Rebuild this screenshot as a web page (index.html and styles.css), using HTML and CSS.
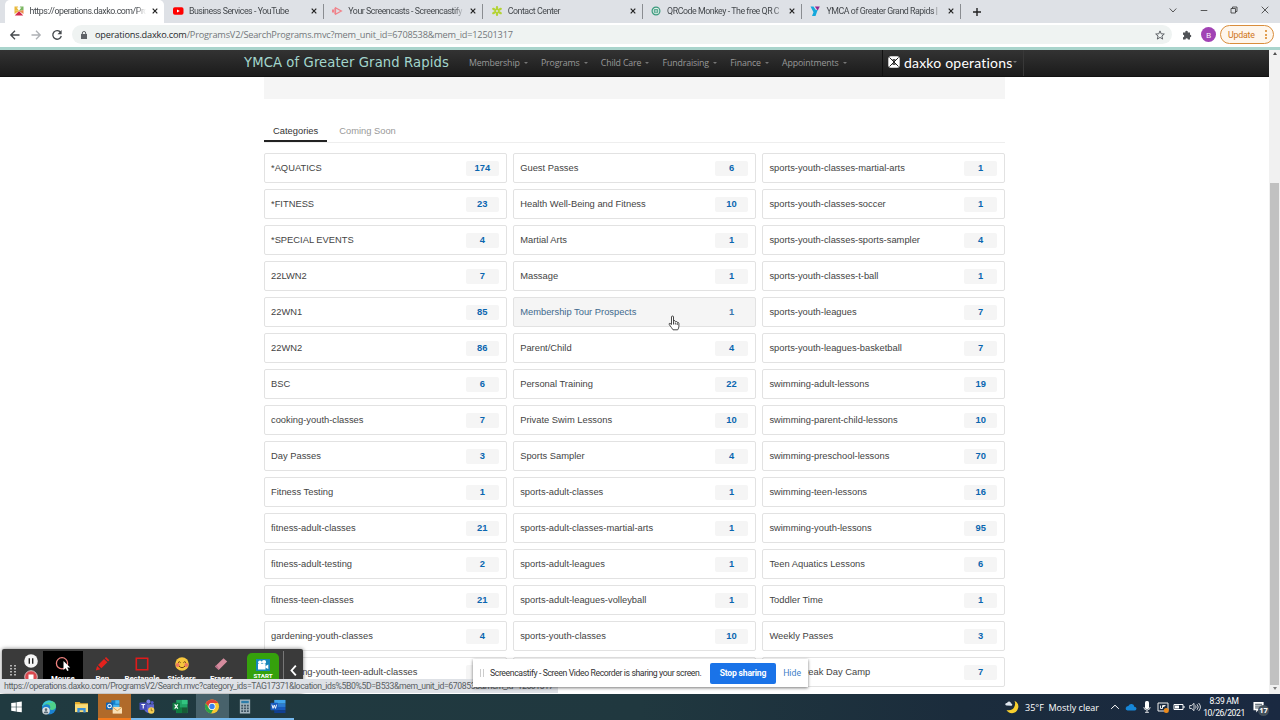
FILE: index.html
```html
<!DOCTYPE html>
<html lang="en">
<head>
    <meta charset="UTF-8">
    <title>Search Programs</title>
    <link rel="stylesheet" href="styles.css">
</head>
<body>
<div class="tabstrip">
    <div class="tab active">
        <svg class="favicon" viewBox="0 0 10 10"><path fill="#e8b93c" d="M.5.500h3.500l1 4.500-4.500-1z"/><path fill="#7bb661" d="M6 .5h3.500V4L5 5z"/><path fill="#d5294d" d="M.8 9.500L5 5l4.200 4.500z"/><path fill="#e8b93c" d="M.5 4l4.500 1-4.500 3z"/><path fill="#e98b4a" d="M9.500 4L5 5l4.500 3z"/><path fill="#fff" d="M2.500 1.500h5L5 4.500z"/></svg>
        <span class="tab-title">https://operations.daxko.com/Pro</span>
        <svg class="close" viewBox="0 0 6 6"><path d="M.7.7l4.600 4.600M5.300.7L.7 5.300"/></svg>
    </div>
    <div class="tab">
        <svg class="favicon" viewBox="0 0 10 10"><rect y="1.300" width="10.500" height="7.400" rx="1.800" fill="#f00"/><path fill="#fff" d="M4 3.400v3.200L6.800 5z"/></svg>
        <span class="tab-title">Business Services - YouTube</span>
        <svg class="close" viewBox="0 0 6 6"><path d="M.7.7l4.600 4.600M5.300.7L.7 5.300"/></svg>
    </div>
    <div class="tab">
        <svg class="favicon" viewBox="0 0 10 10"><path fill="none" stroke="#f0828a" stroke-width="1.300" d="M3.500 1.800L9.300 5 3.500 8.200z"/><path fill="#f0828a" d="M0 3.500h2v3H0zM2.400 2h1.200v6H2.400z"/></svg>
        <span class="tab-title">Your Screencasts - Screencastify</span>
        <svg class="close" viewBox="0 0 6 6"><path d="M.7.7l4.600 4.600M5.300.7L.7 5.300"/></svg>
    </div>
    <div class="tab">
        <svg class="favicon" viewBox="0 0 10 10"><path stroke="#b4d335" stroke-width="2.200" stroke-linecap="round" d="M5 1v8M1.200 2.800l7.600 4.400M1.200 7.200l7.600-4.400"/><circle cx="5" cy="5" r="1" fill="#dee1e6"/></svg>
        <span class="tab-title">Contact Center</span>
        <svg class="close" viewBox="0 0 6 6"><path d="M.7.7l4.600 4.600M5.300.7L.7 5.300"/></svg>
    </div>
    <div class="tab">
        <svg class="favicon" viewBox="0 0 10 10"><circle cx="5" cy="5" r="3.900" fill="#e2f0ea" stroke="#3b9a7d" stroke-width="1.200"/><path fill="none" stroke="#3b9a7d" stroke-width=".8" d="M3.300 3.500h3.400v3.200H3.300zM3 5h4"/></svg>
        <span class="tab-title">QRCode Monkey - The free QR C</span>
        <svg class="close" viewBox="0 0 6 6"><path d="M.7.7l4.600 4.600M5.300.7L.7 5.300"/></svg>
    </div>
    <div class="tab">
        <svg class="favicon" viewBox="0 0 10 10"><path fill="#15a8dc" d="M.5.500h3L6 4.200 8 3 5.500 10H2l1.500-3.800z"/><path fill="#92278f" d="M4.800.500h5L7.700 4.500z"/></svg>
        <span class="tab-title">YMCA of Greater Grand Rapids |</span>
        <svg class="close" viewBox="0 0 6 6"><path d="M.7.7l4.600 4.600M5.300.7L.7 5.300"/></svg>
    </div>
    <svg class="new-tab" viewBox="0 0 8 8"><path d="M4 0v8M0 4h8"/></svg>
    <div class="window-buttons">
        <svg viewBox="0 0 8 8"><path d="M.7 2.500L4 6l3.300-3.500"/></svg>
        <svg viewBox="0 0 8 8"><path d="M.7 4.500h6.600"/></svg>
        <svg viewBox="0 0 8 8"><path d="M1 2.500h4.500V7H1zM2.500 2.500V1H7v4.500H5.500"/></svg>
        <svg viewBox="0 0 8 8"><path d="M.7.7l6.600 6.600M7.300.7L.7 7.300"/></svg>
    </div>
</div>

<div class="toolbar">
    <svg class="nav-icon" viewBox="0 0 12 12"><path d="M10.500 6H2M6 1.800L1.800 6 6 10.200"/></svg>
    <svg class="nav-icon disabled" viewBox="0 0 12 12"><path d="M1.500 6H10M6 1.800L10.200 6 6 10.200"/></svg>
    <svg class="nav-icon" viewBox="0 0 12 12"><path d="M9.700 3.500A4.300 4.300 0 1 0 10.300 7"/><path class="solid" d="M10.600 1v4.200H6.500z"/></svg>
    <div class="omnibox">
        <svg class="lock" viewBox="0 0 6 8"><path d="M0 3h6v5H0z"/><path fill="none" stroke="#5f6368" stroke-width="1" d="M1.300 3.500V2a1.700 1.500 0 0 1 3.400 0v1.500"/></svg>
        <span class="url"><span class="host">operations.daxko.com</span>/ProgramsV2/SearchPrograms.mvc?mem_unit_id=6708538&amp;mem_id=12501317</span>
        <svg class="star" viewBox="0 0 10 10"><path d="M5 .9l1.200 2.900 3.100.2L6.900 6l.8 3.100L5 7.400 2.300 9.100 3.100 6 .7 4l3.100-.2z"/></svg>
    </div>
    <svg class="puzzle" viewBox="0 0 10 10"><path d="M1 2.500h2.300a1.300 1.300 0 1 1 2.500 0H8v2.200a1.300 1.300 0 1 1 0 2.600v2.200H5.900a1.200 1.200 0 1 0-2.400 0H1V7.200a1.200 1.200 0 1 0 0-2.400z"/></svg>
    <div class="avatar">B</div>
    <div class="update">Update<span class="dots"><i></i><i></i><i></i></span></div>
</div>

<div class="viewport">
    <div class="page">
        <div class="navbar">
            <div class="brand">YMCA of Greater Grand Rapids</div>
            <div class="menu">
                <span class="menu-item">Membership</span>
                <span class="menu-item">Programs</span>
                <span class="menu-item">Child Care</span>
                <span class="menu-item">Fundraising</span>
                <span class="menu-item">Finance</span>
                <span class="menu-item">Appointments</span>
            </div>
            <div class="product">
                <svg viewBox="0 0 12 12"><rect x=".3" y=".3" width="11.400" height="11.400" rx="2.500" fill="#fff"/><path stroke="#222" stroke-width="1" d="M1.500 1.500l9 9M10.500 1.500l-9 9"/><path fill="#222" d="M4.200 3.300L6 5.200l1.800-1.900zM4.200 8.700L6 6.800l1.800 1.900z"/></svg>
                <span class="product-name">daxko operations</span>
            </div>
        </div>
        <div class="container">
            <div class="filter-box"></div>
            <div class="pills">
                <a class="pill selected">Categories</a>
                <a class="pill">Coming Soon</a>
            </div>
            <div class="categories">
                <a class="category">*AQUATICS<b>174</b></a>
                <a class="category">*FITNESS<b>23</b></a>
                <a class="category">*SPECIAL EVENTS<b>4</b></a>
                <a class="category">22LWN2<b>7</b></a>
                <a class="category">22WN1<b>85</b></a>
                <a class="category">22WN2<b>86</b></a>
                <a class="category">BSC<b>6</b></a>
                <a class="category">cooking-youth-classes<b>7</b></a>
                <a class="category">Day Passes<b>3</b></a>
                <a class="category">Fitness Testing<b>1</b></a>
                <a class="category">fitness-adult-classes<b>21</b></a>
                <a class="category">fitness-adult-testing<b>2</b></a>
                <a class="category">fitness-teen-classes<b>21</b></a>
                <a class="category">gardening-youth-classes<b>4</b></a>
                <a class="category">gardening-youth-teen-adult-classes<b></b></a>

                <a class="category">Guest Passes<b>6</b></a>
                <a class="category">Health Well-Being and Fitness<b>10</b></a>
                <a class="category">Martial Arts<b>1</b></a>
                <a class="category">Massage<b>1</b></a>
                <a class="category hovered">Membership Tour Prospects<b>1</b></a>
                <a class="category">Parent/Child<b>4</b></a>
                <a class="category">Personal Training<b>22</b></a>
                <a class="category">Private Swim Lessons<b>10</b></a>
                <a class="category">Sports Sampler<b>4</b></a>
                <a class="category">sports-adult-classes<b>1</b></a>
                <a class="category">sports-adult-classes-martial-arts<b>1</b></a>
                <a class="category">sports-adult-leagues<b>1</b></a>
                <a class="category">sports-adult-leagues-volleyball<b>1</b></a>
                <a class="category">sports-youth-classes<b>10</b></a>
                <a class="category"></a>

                <a class="category">sports-youth-classes-martial-arts<b>1</b></a>
                <a class="category">sports-youth-classes-soccer<b>1</b></a>
                <a class="category">sports-youth-classes-sports-sampler<b>4</b></a>
                <a class="category">sports-youth-classes-t-ball<b>1</b></a>
                <a class="category">sports-youth-leagues<b>7</b></a>
                <a class="category">sports-youth-leagues-basketball<b>7</b></a>
                <a class="category">swimming-adult-lessons<b>19</b></a>
                <a class="category">swimming-parent-child-lessons<b>10</b></a>
                <a class="category">swimming-preschool-lessons<b>70</b></a>
                <a class="category">swimming-teen-lessons<b>16</b></a>
                <a class="category">swimming-youth-lessons<b>95</b></a>
                <a class="category">Teen Aquatics Lessons<b>6</b></a>
                <a class="category">Toddler Time<b>1</b></a>
                <a class="category">Weekly Passes<b>3</b></a>
                <a class="category">Spring Break Day Camp<b>7</b></a>
            </div>
        </div>
    </div>
    <div class="scrollbar">
        <span class="arrow up"></span>
        <span class="thumb"></span>
        <span class="arrow down"></span>
    </div>

    <div class="recorder">
        <svg class="grip" viewBox="0 0 6 11"><path stroke="#ddd" stroke-width="1.500" stroke-dasharray="1.500 1.500" d="M1 0v11M5 0v11"/></svg>
        <div class="controls">
            <svg viewBox="0 0 14 14"><circle cx="7" cy="7" r="6.800" fill="#f5f5f5"/><path stroke="#222" stroke-width="1.400" d="M5.300 4.300v5.400M8.700 4.300v5.400"/></svg>
            <svg viewBox="0 0 14 14"><circle cx="7" cy="7" r="6.300" fill="#d9484f" stroke="#ddd" stroke-width=".8"/><path fill="#fff" d="M4.500 4.500h5v5h-5z"/></svg>
        </div>
        <div class="tool current"><svg viewBox="0 0 16 16"><circle cx="7" cy="7.300" r="5.600" fill="none" stroke="#f0827f" stroke-width="1.300"/><path fill="#fff" d="M8.500 5v9l2.200-2 1.500 3 1.500-.8-1.500-2.800h3z"/></svg>Mouse</div>
        <div class="tool"><svg viewBox="0 0 16 16"><path fill="#e3211c" d="M1.800 14.500l1.300-4.500 3.300 3.200zM4 9l6-6 3.400 3.300-6 6zM10.800 2.200L12 1.100l3.300 3.200-1.200 1.200z"/></svg>Pen</div>
        <div class="tool"><svg viewBox="0 0 16 16"><path fill="none" stroke="#e01b1b" stroke-width="1.600" d="M2.300 2.300h11.400v11.400H2.300z"/></svg>Rectangle</div>
        <div class="tool"><svg viewBox="0 0 16 16"><circle cx="8" cy="8" r="6.800" fill="#f8c73d"/><circle cx="3.700" cy="9" r="1.900" fill="#ee7763"/><circle cx="12.300" cy="9" r="1.900" fill="#ee7763"/><path fill="none" stroke="#6b3b12" stroke-width="1" d="M4 6.700q1.300-2 2.600 0M9.400 6.700q1.300-2 2.600 0M5 10q3 3.400 6 0"/></svg>Stickers</div>
        <div class="tool"><svg viewBox="0 0 16 16"><path fill="#d58c9e" d="M2 10.500l8.500-8.300 3.700 3.300-8.500 8.600z"/><path fill="#b76f86" d="M2 10.500l3.700 3.600v-1.600L3.600 9z"/></svg>Eraser</div>
        <div class="start"><svg viewBox="0 0 14 12"><rect x="2" y="5" width="7.500" height="5.500" fill="#fff"/><circle cx="4" cy="3.300" r="1.900" fill="#fff"/><circle cx="8" cy="3" r="2.100" fill="#fff"/><path fill="#fff" d="M9.500 7l2.800-1.500v4.500L9.500 8.800z"/></svg>START</div>
        <svg class="collapse" viewBox="0 0 6 10"><path d="M5 .8L1.300 5 5 9.200"/></svg>
    </div>

    <div class="status-bubble">https://operations.daxko.com/ProgramsV2/Search.mvc?category_ids=TAG17371&amp;location_ids%5B0%5D=B533&amp;mem_unit_id=6708538&amp;mem_id=12501317</div>

    <div class="share-bar">
        <span class="share-grip"></span>
        <span class="share-text">Screencastify - Screen Video Recorder is sharing your screen.</span>
        <button class="stop">Stop sharing</button>
        <a class="hide">Hide</a>
    </div>

    <svg class="pointer" viewBox="0 0 12 16"><path d="M3.500 9.500V2a1 1 0 0 1 2 0v4.500l.3-.8q1.500-.3 1.700.8 1.400-.4 1.700.8 1.600-.2 1.700 1.200v2.800q0 1.900-1.200 3.500H5Q3.500 12.500 1.300 9.700q-.6-1.300.6-1.400z"/><path d="M7.300 7.500v2M5.500 6.500v3M9.200 8v2"/></svg>
</div>

<div class="taskbar">
    <div class="apps">
        <div class="app"><svg viewBox="0 0 14 14"><path fill="#fff" d="M1.300 2.800l5-.7v4.500h-5zM7 2l5.700-.8v5.400H7zM1.300 7.300h5v4.500l-5-.7zM7 7.300h5.700v5.400L7 12z"/></svg></div>
        <div class="app"><svg class="large" viewBox="0 0 16 16"><circle cx="8" cy="8" r="7.500" fill="#1b82d1"/><path fill="#4fd08a" d="M1 6Q3 0 9 .5q7 1 6.500 7-1 3.500-5.500 3-2-.5-.5-2.500Q9 4 5 4.500 2.500 5 1 7z"/><path fill="#35c1e8" d="M1 6Q3 1 8 .7q3 .3 4 2.300Q6 1 1 7z"/><circle cx="4.800" cy="11.500" r="4" fill="#dbe0e3"/><circle cx="4.800" cy="10.300" r="1.400" fill="#596b78"/><path fill="#596b78" d="M2.200 14q0-2 2.600-2t2.600 2z"/></svg></div>
        <div class="app"><svg viewBox="0 0 14 14"><path fill="#e8ad2c" d="M0 1.500h5l1 1.500h8v9H0z"/><path fill="#fbdc78" d="M0 4h14v8.500H0z"/><path fill="#3b90d8" d="M2.500 8.200h9v4.800H9V10.500H5V13H2.500z"/></svg></div>
        <div class="app running alert"><svg class="large" viewBox="0 0 18 16"><path fill="#1380cd" d="M6 1h9v10H6z"/><path fill="#44b3ee" d="M10.500 1H15v4h-4.500zM6 6h9v5H6z"/><rect y="3.500" width="8" height="8" rx=".8" fill="#0f64b5"/><circle cx="4" cy="7.500" r="2" fill="none" stroke="#fff" stroke-width="1.200"/><path fill="#fae0b4" d="M7.500 8.500H18V16H7.500z"/><path fill="none" stroke="#d89943" d="M7.500 8.800l5.200 4 5.300-4"/></svg></div>
        <div class="app running"><svg class="large" viewBox="0 0 16 16"><circle cx="9.500" cy="2.800" r="2.200" fill="#7b83eb"/><circle cx="13.500" cy="3.800" r="1.600" fill="#5059c9"/><path fill="#5f66cf" d="M5 5.500h10.500v6q-2 3.500-5 3.500-5-.5-5.500-5z"/><rect y="3.800" width="8" height="8" rx=".8" fill="#464eb8"/><path stroke="#fff" stroke-width="1.200" d="M2 5.800h4M4 5.800v4.300"/><circle cx="12.500" cy="12.300" r="3.400" fill="#f8cf51"/><path fill="none" stroke="#7b5d17" stroke-width=".8" d="M12.500 10v2.500h1.700"/></svg></div>
        <div class="app running"><svg class="large" viewBox="0 0 16 16"><path fill="#21a366" d="M4 1h12v14H4z"/><path fill="#33c481" d="M10 1h6v4.500h-6z"/><path fill="#107c41" d="M4 9h6v6H4z"/><path fill="#185c37" d="M10 9h6v6h-6z"/><rect y="4" width="8" height="8" rx=".8" fill="#107c41"/><path stroke="#fff" stroke-width="1.200" d="M2.300 5.700l3.400 4.600M5.700 5.700l-3.400 4.600"/></svg></div>
        <div class="app running focused"><svg class="large" viewBox="0 0 16 16"><circle cx="8" cy="8" r="7.500" fill="#f9c92f"/><path fill="#df4135" d="M8 .5a7.500 7.500 0 0 1 6.500 3.800H8A3.700 3.700 0 0 0 4.500 9L1.400 4.400A7.500 7.500 0 0 1 8 .5z"/><path fill="#2aa14c" d="M1.400 4.400L4.700 10q1.300 2 4.300 1.700L7 15.500A7.500 7.500 0 0 1 1.400 4.400z"/><circle cx="8" cy="8" r="3.700" fill="#fff"/><circle cx="8" cy="8" r="2.900" fill="#3b82ef"/></svg></div>
        <div class="app running"><svg class="large" viewBox="0 0 16 16"><path fill="#a3b4bd" d="M2.500.5h11v15h-11z"/><path fill="#2d7ca9" d="M4 2h8v2.500H4z"/><path stroke="#3d5260" stroke-width="1.800" stroke-dasharray="2 1" d="M4 7h8M4 10h8M4 13h8"/></svg></div>
        <div class="app running"><svg class="large" viewBox="0 0 16 16"><path fill="#41a5ee" d="M4 1h12v4H4z"/><path fill="#2b7cd3" d="M4 5h12v3.500H4z"/><path fill="#185abd" d="M4 8.500h12V12H4z"/><path fill="#103f91" d="M4 12h12v3H4z"/><rect y="4" width="8" height="8" rx=".8" fill="#185abd"/><path fill="none" stroke="#fff" d="M1.500 6l1.200 4L4 6.500 5.300 10l1.200-4"/></svg></div>
    </div>
    <div class="tray">
        <svg class="moon" viewBox="0 0 14 14"><path fill="#f8d02e" d="M9.500.8Q14 3 13.300 7.500 12 13 7 13.200 3 13 1.500 10 7 11 9 7.500 11 4 9.500.8z"/><path fill="#dfe6ee" d="M1.500 5.500Q0 5.300.3 3.900.8 2.800 2 3q.6-1.700 2.300-1.500Q6 2 6 3.500q1.300.1 1.300 1.200T6 5.700z"/></svg>
        <span class="weather">35°F&nbsp; Mostly clear</span>
        <svg class="tray-icon" viewBox="0 0 12 12"><path fill="none" stroke="#fff" d="M2.200 7.800L6 4.200l3.800 3.600"/></svg>
        <svg class="tray-icon" viewBox="0 0 12 12"><path fill="#1687d9" d="M2.500 9.500Q.3 9 .7 7 1.300 5 3.300 5q1.200-2.400 3.500-2 2.200.4 2.500 2.700 2 .1 2.200 1.900-.1 1.800-1.700 1.900z"/></svg>
        <svg class="tray-icon" viewBox="0 0 12 12"><rect x="4" y="0" width="4" height="8" rx="1.500" fill="#fff"/><path fill="none" stroke="#fff" stroke-width=".8" d="M2.800 6q0 3 3.200 3t3.200-3M6 9v2.500M4 11.300h4"/></svg>
        <svg class="tray-icon" viewBox="0 0 12 12"><path fill="none" stroke="#eee" d="M1 2h10v7M1 2v8h6M3.500 4.500v3h2v-3h3M5.500 5.500h2"/><circle cx="9.300" cy="9.500" r="2.500" fill="#ec8b1d"/></svg>
        <svg class="tray-icon" viewBox="0 0 12 12"><path fill="none" stroke="#fff" d="M1 3.500h9v5H1zM11 5v2"/><path fill="#fff" d="M2 4.500h4v3H2z"/></svg>
        <svg class="tray-icon" viewBox="0 0 12 12"><path fill="none" stroke="#fff" stroke-width=".8" d="M.7 4.500h2L5 2.300v7.400L2.700 7.500h-2zM6.500 4.500q1.300 1.500 0 3M8 3.200q2.500 2.800 0 5.600M9.600 2q3.700 4 0 8"/></svg>
        <div class="clock"><span>8:39 AM</span><span>10/26/2021</span></div>
        <div class="notifications">
            <svg viewBox="0 0 13 13"><path fill="#fff" d="M.5.5h11v9H5.500L3.500 12V9.500h-3z"/><path stroke="#1b2d3b" stroke-width=".9" d="M2.300 3h7.500M2.300 5h7.500M2.300 7h5"/></svg>
            <span class="count">17</span>
        </div>
    </div>
</div>
</body>
</html>
```
FILE: styles.css
```css
* {
    box-sizing: border-box;
}
body {
    margin: 0;
    width: 1280px;
    height: 720px;
    overflow: hidden;
    display: flex;
    flex-direction: column;
    font-family: "Open Sans", "Noto Sans", sans-serif;
    font-size: 9px;
    background: #fff;
}
svg {
    display: block;
    flex: none;
}
.tabstrip {
    flex: none;
    height: 23px;
    padding-left: 5px;
    display: flex;
    align-items: center;
    background: #dee1e6;
}
.tab {
    flex: none;
    width: 159.4px;
    height: 23px;
    padding: 0 6px 1px 8.500px;
    display: flex;
    align-items: center;
    color: #45494d;
    border-right: 1px solid #8a8d91;
    border-image: linear-gradient(transparent 5px, #8a8d91 5px, #8a8d91 18px, transparent 18px) 1;
}
.tab.active {
    background: #fff;
    border: 0;
    border-radius: 5px 5px 0 0;
}
.favicon {
    width: 10px;
    height: 10px;
    margin-right: 6px;
    overflow: visible;
}
.tab-title {
    flex: 1;
    overflow: hidden;
    white-space: nowrap;
    font-family: Roboto, sans-serif;
    font-size: 8.800px;
    letter-spacing: -0.45px;
    margin-right: 6px;
    -webkit-mask-image: linear-gradient(to right, #000 92%, transparent);
}
.close {
    width: 6px;
    height: 6px;
    fill: none;
    stroke: #222;
    stroke-width: 1.200;
}
.new-tab {
    width: 8px;
    height: 8px;
    margin-left: 12px;
    stroke: #222;
    stroke-width: 1.400;
}
.window-buttons {
    margin-left: auto;
    padding-right: 11px;
    height: 23px;
    padding-bottom: 4px;
    display: flex;
    align-items: center;
    gap: 22.700px;
}
.window-buttons svg {
    width: 8px;
    height: 8px;
    fill: none;
    stroke: #333;
    stroke-width: 0.8;
}
.toolbar {
    flex: none;
    height: 24px;
    padding: 0 6px 1px 9px;
    display: flex;
    align-items: center;
    background: #fff;
}
.nav-icon {
    width: 12px;
    height: 12px;
    margin-right: 9px;
    fill: none;
    stroke: #45494d;
    stroke-width: 1.300;
}
.nav-icon .solid {
    fill: #45494d;
    stroke: none;
}
.nav-icon.disabled {
    stroke: #aeb1b5;
}
.omnibox {
    width: 1100px;
    flex: none;
    height: 19px;
    padding: 0 7px 0 9px;
    display: flex;
    align-items: center;
    border-radius: 10px;
    background: #eff3f2;
}
.lock {
    width: 6px;
    height: 8px;
    margin-right: 8px;
    fill: #5f6368;
}
.url {
    flex: 1;
    color: #73777b;
    font-size: 9.200px;
    letter-spacing: -0.19px;
    white-space: nowrap;
}
.host {
    color: #26292c;
}
.star {
    width: 10px;
    height: 10px;
    fill: none;
    stroke: #5f6368;
}
.puzzle {
    width: 10px;
    height: 10px;
    margin: 0 9px 0 10px;
    fill: #505357;
}
.avatar {
    flex: none;
    width: 15px;
    height: 15px;
    margin-right: 4px;
    border-radius: 50%;
    background: #a142b4;
    color: #fff;
    font-size: 8px;
    line-height: 15px;
    text-align: center;
}
.update {
    width: 54px;
    flex: none;
    height: 19px;
    padding: 0 6px 0 7px;
    display: flex;
    align-items: center;
    justify-content: space-between;
    border: 1px solid #d98d3b;
    border-radius: 10px;
    background: #fef6ec;
    color: #cf7519;
    font-family: Roboto, sans-serif;
    font-size: 8.800px;
    letter-spacing: -0.2px;
}
.dots {
    display: flex;
    flex-direction: column;
    gap: 1.500px;
}
.dots i {
    width: 2px;
    height: 2px;
    border-radius: 50%;
    background: #d9821f;
}

/* browser content area */
.viewport {
    position: relative;
    flex: none;
    height: 647px;
    display: flex;
    overflow: hidden;
    border-top: 3px solid #a9d4cc;
}
.page {
    flex: none;
    width: 1269px;
}
.navbar {
    height: 27px;
    padding-left: 244px;
    display: flex;
    align-items: center;
    background: linear-gradient(#333, #1b1b1b);
    border-bottom: 1px solid #111;
    white-space: nowrap;
}
.brand {
    width: 225px;
    color: #a3d6cd;
    font-family: "DejaVu Sans", Verdana, sans-serif;
    font-size: 13.200px;
    letter-spacing: 0.1px;
    line-height: 24px;
    padding-bottom: 1px;
}
.menu {
    width: 413px;
    padding-bottom: 1px;
    display: flex;
    gap: 13.200px;
    color: #999;
    font-size: 8.800px;
    letter-spacing: -0.14px;
}
.menu-item {
    display: flex;
    align-items: center;
    gap: 4px;
}
.menu-item::after, .product::after {
    content: "";
    border: 2.500px solid transparent;
    border-top-color: #777;
    border-bottom: 0;
}
.product {
    width: 142px;
    height: 26px;
    padding: 0 0 2px 5px;
    display: flex;
    align-items: center;
    border-left: 1px solid #111;
    border-right: 1px solid #383838;
}
.product svg {
    width: 12px;
    height: 12px;
    margin-right: 4px;
}
.product-name {
    color: #fff;
    font-family: Lato, sans-serif;
    font-size: 14px;
    letter-spacing: 0.2px;
    margin-right: 1px;
}
.container {
    width: 741px;
    margin-left: 264px;
    font-family: "Liberation Sans", Arial, sans-serif;
    font-size: 9.350px;
}
.filter-box {
    height: 22px;
    background: #f5f5f5;
}
.pills {
    height: 44px;
    margin-bottom: 10px;
    display: flex;
    align-items: flex-end;
    border-bottom: 1px solid #eee;
}
.pill {
    height: 24px;
    padding: 0 9px;
    margin-right: 3px;
    line-height: 26px;
    color: #999;
    border-bottom: 0 solid #222;
}
.pill.selected {
    color: #333;
    border-bottom-width: 2px;
}
.categories {
    display: grid;
    grid-template-rows: repeat(15, 30px);
    grid-template-columns: repeat(3, 242.800px);
    grid-auto-flow: column;
    gap: 6px 6.400px;
}
.category {
    padding: 0 7px 0 6px;
    display: flex;
    align-items: center;
    justify-content: space-between;
    border: 1px solid #e2e2e2;
    border-radius: 2px;
    color: #444;
}
.category b {
    width: 33px;
    height: 15px;
    border-radius: 2px;
    background: #f5f5f5;
    color: #0a66b0;
    line-height: 15px;
    text-align: center;
}
.category.hovered {
    background: #f5f5f5;
    color: #426a8e;
}
.category.hovered b {
    color: #3976ad;
}
.scrollbar {
    flex: 1;
    display: flex;
    flex-direction: column;
    align-items: center;
    background: #f1f1f1;
}
.thumb {
    width: 9px;
    height: 502px;
    margin-top: 128px;
    background: #c1c1c1;
}
.arrow {
    border: 2.500px solid transparent;
}
.arrow.up {
    border-top: 0;
    border-bottom: 3px solid #505050;
    margin-top: 2px;
}
.arrow.down {
    border-bottom: 0;
    border-top: 3px solid #808080;
    margin-top: 2px;
}

/* floating layers over the page */
.recorder {
    position: absolute;
    left: 2px;
    top: 599px;
    width: 301px;
    height: 44px;
    padding: 2px 0 0 8px;
    display: flex;
    background: #3a3a3a;
    border-radius: 2px;
    box-shadow: 0 0 4px #0008;
    color: #fff;
}
.grip {
    width: 6px;
    height: 11px;
    margin: 14px 8px 0 0;
}
.controls {
    width: 19px;
    padding-top: 3px;
}
.controls svg {
    width: 14px;
    height: 14px;
    margin-bottom: 2px;
}
.tool {
    width: 39.600px;
    padding-top: 5px;
    display: flex;
    flex-direction: column;
    align-items: center;
    font-family: Roboto, sans-serif;
    font-size: 7.800px;
    line-height: 14px;
    font-weight: bold;
}
.tool.current {
    background: #000;
}
.tool svg {
    width: 16px;
    height: 16px;
}
.start {
    width: 32px;
    margin: 2px 4px 0 6px;
    padding-top: 6px;
    border-radius: 5px;
    background: #35a10c;
    font-family: Roboto, sans-serif;
    font-size: 6.200px;
    font-weight: bold;
    text-align: center;
}
.start svg {
    width: 14px;
    height: 12px;
    margin: 0 auto 1px;
    background: #1686b8;
}
.collapse {
    width: 14px;
    height: 34px;
    padding: 5px 0 0 6px;
    border-left: 1px solid #777;
    fill: none;
    stroke: #fff;
    stroke-width: 1.600;
}
.status-bubble {
    position: absolute;
    left: 0;
    top: 629px;
    width: 558px;
    height: 14px;
    padding-left: 4px;
    background: #dee1e6;
    color: #5a5f64;
    font-family: Roboto, sans-serif;
    font-size: 8.700px;
    letter-spacing: -0.4px;
    line-height: 15px;
    white-space: nowrap;
}
.share-bar {
    position: absolute;
    left: 473px;
    top: 609px;
    width: 335px;
    height: 28px;
    padding: 0 7px;
    display: flex;
    align-items: center;
    background: #fff;
    box-shadow: 0 1px 3px #0008;
    font-family: Roboto, sans-serif;
    font-size: 8.700px;
    white-space: nowrap;
}
.share-grip {
    width: 4px;
    height: 8px;
    margin-right: 6px;
    border: solid #ccc;
    border-width: 0 1px;
}
.share-text {
    width: 221px;
    color: #333;
    letter-spacing: -0.4px;
}
.stop {
    width: 67px;
    height: 21px;
    padding: 0;
    border: 0;
    border-radius: 2px;
    background: #1a73e8;
    color: #fff;
    font: bold 8.600px Roboto, sans-serif;
    letter-spacing: -0.2px;
}
.hide {
    margin-left: 7px;
    color: #3f7fc8;
}
.pointer {
    position: absolute;
    left: 668px;
    top: 265px;
    width: 12px;
    height: 16px;
    fill: #fff;
    stroke: #333;
    stroke-width: 0.9;
}

.taskbar {
    flex: none;
    height: 26px;
    display: flex;
    justify-content: space-between;
    color: #fff;
    background: linear-gradient(to right, #203a40, #20383f 50%, #1b2c3c 75%, #1a2941);
}
.apps {
    display: flex;
}
.app {
    width: 32.700px;
    height: 26px;
    display: flex;
    align-items: center;
    justify-content: center;
}
.app svg {
    width: 13px;
    height: 14px;
}
.app svg.large {
    width: 16px;
    height: 15px;
}
.app.running {
    border-bottom: 2px solid #76b9ed;
    padding-top: 1px;
    background-clip: padding-box;
}
.app.alert {
    background-color: #b06a2a;
    border-color: #f37a1c;
}
.app.focused {
    background-color: #48626b;
}
.tray {
    display: flex;
    align-items: center;
    gap: 4px;
}
.moon {
    width: 14px;
    height: 14px;
    margin-right: 2px;
}
.weather {
    width: 80px;
}
.tray-icon {
    width: 12px;
    height: 12px;
}
.clock {
    width: 38px;
    display: flex;
    flex-direction: column;
    align-items: center;
    line-height: 12px;
    font-family: Roboto, sans-serif;
    font-size: 8.500px;
    letter-spacing: -0.35px;
    padding-bottom: 1px;
}
.notifications {
    position: relative;
    width: 27px;
    margin-left: 6px;
}
.notifications svg {
    width: 12px;
    height: 13px;
}
.count {
    position: absolute;
    left: 5px;
    top: 4px;
    width: 11px;
    height: 11px;
    border-radius: 50%;
    background: #43505b;
    font-size: 7.500px;
    font-weight: bold;
    line-height: 11px;
    text-align: center;
}
```
